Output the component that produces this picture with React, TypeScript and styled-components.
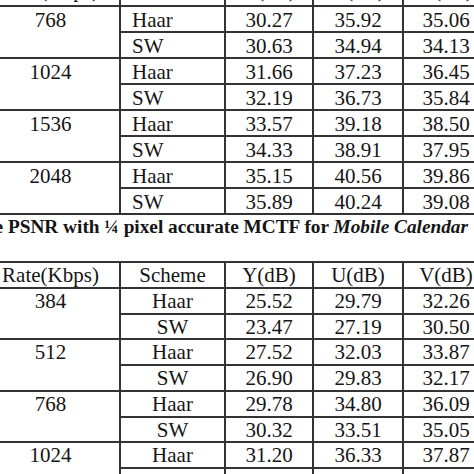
import * as React from 'react'
import styled, { createGlobalStyle } from 'styled-components'

const GlobalStyle = createGlobalStyle`
  html, body {
    margin: 0;
    padding: 0;
    overflow: hidden;
    background: #fff;
  }
  body {
    font-family: 'Liberation Serif', 'Times New Roman', serif;
    color: #151515;
  }
`

const Page = styled.div`
  width: 510px;
  margin: -21px 0 0 -20px;
`

const Grid = styled.div<{ $row: number }>`
  display: grid;
  grid-template-columns: 137px 103px 86px 88px 84px;
  grid-auto-rows: ${p => p.$row}px;
  gap: 2px;
  padding: 2px;
  background: #333;
  font-size: 21px;
`

const Cell = styled.div<{ $align?: 'left' | 'center'; $row: number }>`
  background: #fff;
  text-align: ${p => p.$align || 'center'};
  padding-left: ${p => (p.$align === 'left' ? '11px' : '0')};
  padding-top: 1px;
  line-height: ${p => p.$row}px;
  white-space: nowrap;
  overflow: hidden;
`

const RateCell = styled(Cell)`
  grid-row: span 2;
`

const Caption = styled.div`
  display: flex;
  justify-content: flex-end;
  height: 46px;
  padding-right: 22px;
  font-size: 19.3px;
  font-weight: 700;
  line-height: 24px;
  white-space: nowrap;
`

const Em = styled.em`
  font-style: italic;
`

type Group = { rate: string; haar: string[]; sw: string[] }

const first: Group[] = [
  { rate: '768', haar: ['30.27', '35.92', '35.06'], sw: ['30.63', '34.94', '34.13'] },
  { rate: '1024', haar: ['31.66', '37.23', '36.45'], sw: ['32.19', '36.73', '35.84'] },
  { rate: '1536', haar: ['33.57', '39.18', '38.50'], sw: ['34.33', '38.91', '37.95'] },
  { rate: '2048', haar: ['35.15', '40.56', '39.86'], sw: ['35.89', '40.24', '39.08'] },
]

const second: Group[] = [
  { rate: '384', haar: ['25.52', '29.79', '32.26'], sw: ['23.47', '27.19', '30.50'] },
  { rate: '512', haar: ['27.52', '32.03', '33.87'], sw: ['26.90', '29.83', '32.17'] },
  { rate: '768', haar: ['29.78', '34.80', '36.09'], sw: ['30.32', '33.51', '35.05'] },
  { rate: '1024', haar: ['31.20', '36.33', '37.87'], sw: ['31.04', '35.62', '37.12'] },
]

const headers = ['Rate(Kbps)', 'Scheme', 'Y(dB)', 'U(dB)', 'V(dB)']

const PsnrTable = ({
  groups,
  row,
  headLine,
  schemeAlign,
}: {
  groups: Group[]
  row: number
  headLine: number
  schemeAlign: 'left' | 'center'
}) => (
  <Grid $row={row}>
    {headers.map(h => (
      <Cell key={h} $row={headLine} $align={h === 'Scheme' ? schemeAlign : 'center'}>
        {h}
      </Cell>
    ))}
    {groups.map(g => (
      <React.Fragment key={g.rate}>
        <RateCell $row={row}>{g.rate}</RateCell>
        <Cell $row={row} $align={schemeAlign}>Haar</Cell>
        {g.haar.map((v, i) => (
          <Cell key={'h' + i} $row={row}>{v}</Cell>
        ))}
        <Cell $row={row} $align={schemeAlign}>SW</Cell>
        {g.sw.map((v, i) => (
          <Cell key={'s' + i} $row={row}>{v}</Cell>
        ))}
      </React.Fragment>
    ))}
  </Grid>
)

export default function App() {
  return (
    <>
      <GlobalStyle />
      <Page>
        <PsnrTable groups={first} row={24} headLine={16} schemeAlign="left" />
        <Caption>
          <span>
            The PSNR with ¼ pixel accurate MCTF for <Em>Mobile Calendar</Em>
          </span>
        </Caption>
        <PsnrTable groups={second} row={23.75} headLine={22.75} schemeAlign="center" />
      </Page>
    </>
  )
}
